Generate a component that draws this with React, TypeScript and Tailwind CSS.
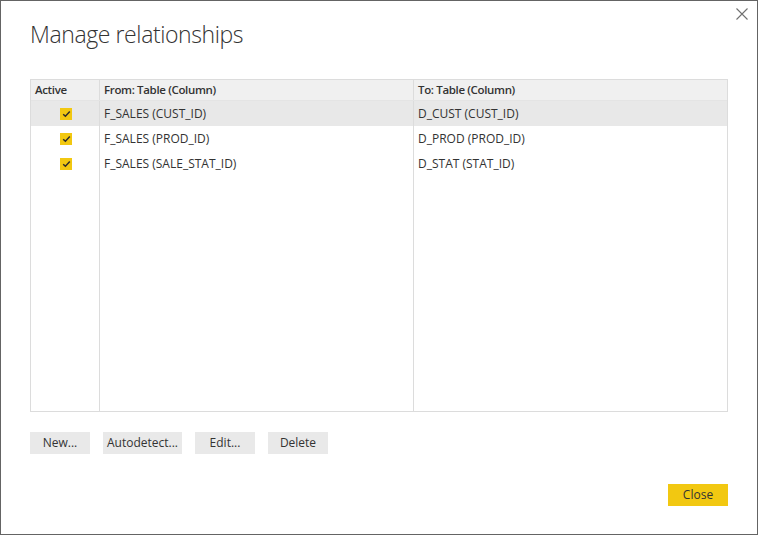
const rows = [
  { from: "F_SALES (CUST_ID)", to: "D_CUST (CUST_ID)", selected: true },
  { from: "F_SALES (PROD_ID)", to: "D_PROD (PROD_ID)", selected: false },
  { from: "F_SALES (SALE_STAT_ID)", to: "D_STAT (STAT_ID)", selected: false },
];

function Check() {
  return (
    <div className="w-[12px] h-[12px] bg-[#f2c811] flex items-center justify-center">
      <svg width="9" height="8" viewBox="0 0 9 8" fill="none">
        <path d="M1.2 4.2 L3.4 6.3 L7.8 1.6" stroke="#2b2b2b" strokeWidth="1.5" />
      </svg>
    </div>
  );
}

export default function App() {
  return (
    <div className="relative w-[758px] h-[535px] border border-[#646464] bg-white text-[#333] font-['Open_Sans',sans-serif]">
      <button className="absolute top-[7px] right-[9px]">
        <svg width="12" height="12" viewBox="0 0 12 12" fill="none">
          <path d="M0.5 0.5 L11.5 11.5 M11.5 0.5 L0.5 11.5" stroke="#707070" strokeWidth="1.1" />
        </svg>
      </button>

      <div className="pl-[29px] pr-[29px]">
        <h1 className="mt-[17px] text-[23px] leading-[32px] font-light tracking-[-0.4px] text-[#333]">
          Manage relationships
        </h1>

        <div className="mt-[29px] h-[333px] border border-[#dcdcdc] flex flex-col text-[12px]">
          <div className="flex h-[21px] bg-[#f0f0f0] border-b border-[#e4e4e4] font-semibold text-[11.5px] tracking-[-0.35px]">
            <div className="w-[69px] border-r border-[#dcdcdc] pl-[4px] flex items-center">Active</div>
            <div className="w-[314px] border-r border-[#dcdcdc] pl-[4px] flex items-center">From: Table (Column)</div>
            <div className="flex-1 pl-[4px] flex items-center">To: Table (Column)</div>
          </div>
          {rows.map((r) => (
            <div key={r.from} className={`flex h-[25px] ${r.selected ? "bg-[#e8e8e8]" : ""}`}>
              <div className="w-[69px] border-r border-[#dcdcdc] flex items-center justify-center pl-[2px]">
                <Check />
              </div>
              <div className="w-[314px] border-r border-[#dcdcdc] pl-[4px] flex items-center">{r.from}</div>
              <div className="flex-1 pl-[4px] flex items-center">{r.to}</div>
            </div>
          ))}
          <div className="flex flex-1">
            <div className="w-[69px] border-r border-[#dcdcdc]" />
            <div className="w-[314px] border-r border-[#dcdcdc]" />
            <div className="flex-1" />
          </div>
        </div>

        <div className="mt-[20px] flex gap-[13px] text-[12px]">
          <button className="w-[60px] h-[22px] bg-[#e9e9e9]">New...</button>
          <button className="w-[79px] h-[22px] bg-[#e9e9e9]">Autodetect...</button>
          <button className="w-[60px] h-[22px] bg-[#e9e9e9]">Edit...</button>
          <button className="w-[60px] h-[22px] bg-[#e9e9e9]">Delete</button>
        </div>

        <div className="mt-[30px] flex justify-end">
          <button className="w-[60px] h-[22px] bg-[#f2c811] text-[12px]">Close</button>
        </div>
      </div>
    </div>
  );
}
